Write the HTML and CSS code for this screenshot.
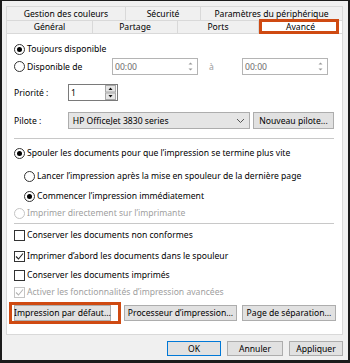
FILE: index.html
```html
<!DOCTYPE html>
<html>
<head>
<meta charset="utf-8">
<link rel="stylesheet" href="styles.css">
</head>
<body>
<div class="win">
  <div class="tabs">
    <div class="tabrow">
      <div class="tab w-gest">Gestion des couleurs</div>
      <div class="tab w-secu">Sécurité</div>
      <div class="tab w-param last">Paramètres du périphérique</div>
    </div>
    <div class="tabrow row2">
      <div class="tab w-gen">Général</div>
      <div class="tab w-part">Partage</div>
      <div class="tab w-ports">Ports</div>
      <div class="tab w-av last sel">Avancé<span class="mark mark-tab"></span></div>
    </div>
  </div>
  <div class="panel">
    <div class="row mt7"><span class="radio on"></span><span>Toujours disponible</span></div>
    <div class="row h17 mt1">
      <div class="lbl-avail"><span class="radio"></span><span>Disponible de</span></div>
      <div class="input time dis"><span class="val">00:00</span><span class="spin"><svg width="11" height="15" viewBox="0 0 11 15"><path d="M3.5 5.5 L5.5 3.5 L7.5 5.5 Z" fill="#9a9a9a"/><path d="M3.5 9.5 L5.5 11.5 L7.5 9.5 Z" fill="#9a9a9a"/></svg></span></div>
      <span class="to">à</span>
      <div class="input time dis"><span class="val">00:00</span><span class="spin"><svg width="11" height="15" viewBox="0 0 11 15"><path d="M3.5 5.5 L5.5 3.5 L7.5 5.5 Z" fill="#9a9a9a"/><path d="M3.5 9.5 L5.5 11.5 L7.5 9.5 Z" fill="#9a9a9a"/></svg></span></div>
    </div>
    <div class="row h17 mt9">
      <span class="lbl">Priorité :</span>
      <div class="input prio"><span class="val">1</span><span class="spin dark"><svg width="11" height="15" viewBox="0 0 11 15"><rect x="0.5" y="0.5" width="10" height="6.5" fill="#e5e5e5" stroke="#a8a8a8"/><rect x="0.5" y="8" width="10" height="6.5" fill="#e5e5e5" stroke="#a8a8a8"/><path d="M3.5 5 L5.5 2.5 L7.5 5 Z" fill="#111"/><path d="M3.5 10 L5.5 12.5 L7.5 10 Z" fill="#111"/></svg></span></div>
    </div>
    <div class="row h17 mt11">
      <span class="lbl">Pilote :</span>
      <div class="select"><span>HP OfficeJet 3830 series</span><svg width="9" height="6" viewBox="0 0 9 6"><path d="M1 1 L4.5 4.5 L8 1" fill="none" stroke="#555" stroke-width="1"/></svg></div>
      <span class="btn b-new">Nouveau pilote...</span>
    </div>
    <div class="sep mt9"></div>
    <div class="row mt6"><span class="radio on"></span><span>Spouler les documents pour que l’impression se termine plus vite</span></div>
    <div class="row ind mt7"><span class="radio"></span><span>Lancer l’impression après la mise en spouleur de la dernière page</span></div>
    <div class="row ind mt4"><span class="radio on"></span><span>Commencer l’impression immédiatement</span></div>
    <div class="row mt1 disabled"><span class="radio dis"></span><span>Imprimer directement sur l’imprimante</span></div>
    <div class="sep mt2"></div>
    <div class="row mt3"><span class="check"></span><span>Conserver les documents non conformes</span></div>
    <div class="row mt5"><span class="check"><svg width="9" height="9" viewBox="0 0 9 9"><path d="M1 4.5 L3.5 7 L8 1.5" fill="none" stroke="#222" stroke-width="1.1"/></svg></span><span>Imprimer d’abord les documents dans le spouleur</span></div>
    <div class="row mt3"><span class="check"></span><span>Conserver les documents imprimés</span></div>
    <div class="row mt1 disabled"><span class="check dis"><svg width="9" height="9" viewBox="0 0 9 9"><path d="M1 4.5 L3.5 7 L8 1.5" fill="none" stroke="#b5b5b5" stroke-width="1.1"/></svg></span><span>Activer les fonctionnalités d’impression avancées</span></div>
    <div class="row btnrow mt5">
      <span class="btn b-def">Impression par défaut...<span class="mark mark-btn"></span></span>
      <span class="btn b-proc">Processeur d’impression...</span>
      <span class="btn b-sep">Page de séparation...</span>
    </div>
  </div>
  <div class="footer">
    <span class="btn f-ok">OK</span>
    <span class="btn f-cancel">Annuler</span>
    <span class="btn f-apply">Appliquer</span>
  </div>
</div>
</body>
</html>
```
FILE: styles.css
```css
* { box-sizing: border-box; }
html, body { margin: 0; padding: 0; }
body {
  width: 350px;
  height: 363px;
  overflow: hidden;
  font-family: "Noto Sans", "Open Sans", sans-serif;
  font-size: 8.6px;
  color: #000;
}
.win {
  width: 350px;
  height: 363px;
  background: #f0f0f0;
  border-top: 1px solid #1b1b1b;
  border-left: 2px solid #1b1b1b;
  border-right: 2px solid #1b1b1b;
  border-bottom: 3px solid #1b1b1b;
  padding: 5px 5px 0 4px;
  display: flex;
  flex-direction: column;
}
.tabs { display: flex; flex-direction: column; }
.tabrow { display: flex; height: 14px; }
.tabrow.row2 { height: 13px; }
.tab {
  position: relative;
  border-top: 1px solid #d9d9d9;
  border-left: 1px solid #d9d9d9;
  background: #f0f0f0;
  display: flex;
  align-items: center;
  justify-content: center;
  line-height: 12px;
  white-space: nowrap;
}
.tab.last { border-right: 1px solid #d9d9d9; }
.tab.sel { background: #fff; }
.w-gest { width: 119px; }
.w-secu { width: 75px; }
.w-param { width: 143px; }
.w-gen { width: 86px; }
.w-part { width: 85px; }
.w-ports { width: 81px; }
.w-av { width: 85px; }

.mark { position: absolute; border: 3px solid #cf4a12; pointer-events: none; }
.mark-tab { left: 0; top: -2px; width: 80px; height: 15px; }
.mark-btn { left: -6px; top: -4px; right: -11px; bottom: -4px; }

.panel {
  background: #fff;
  border: 1px solid #d9d9d9;
  height: 302px;
  padding: 0 8px 0 7px;
  display: flex;
  flex-direction: column;
}
.row { display: flex; align-items: center; height: 16px; white-space: nowrap; }
.h17 { height: 17px; }
.ind { padding-left: 10px; }
.mt1 { margin-top: 1px; }
.mt2 { margin-top: 2px; }
.mt3 { margin-top: 3px; }
.mt4 { margin-top: 4px; }
.mt5 { margin-top: 5px; }
.mt6 { margin-top: 6px; }
.mt7 { margin-top: 7px; }
.mt9 { margin-top: 9px; }
.mt11 { margin-top: 11px; }

.radio {
  position: relative;
  width: 11px;
  height: 11px;
  border: 1px solid #333;
  border-radius: 50%;
  margin-right: 2px;
  flex: none;
  background: #fff;
}
.radio.on::after {
  content: "";
  position: absolute;
  left: 2px; top: 2px;
  width: 5px; height: 5px;
  border-radius: 50%;
  background: #000;
}
.radio.dis { border-color: #c4c4c4; }
.check {
  width: 11px;
  height: 11px;
  border: 1px solid #333;
  margin-right: 2px;
  flex: none;
  display: flex;
  align-items: center;
  justify-content: center;
  background: #fff;
}
.check.dis { border-color: #c4c4c4; }
.disabled { color: #a0a0a0; }

.lbl-avail { display: flex; align-items: center; width: 98px; }
.lbl { width: 54px; }
.input {
  display: flex;
  align-items: center;
  justify-content: space-between;
  height: 17px;
  border: 1px solid #7a7a7a;
  background: #fff;
  padding-left: 2px;
}
.input.dis { border-color: #b4b4b4; color: #6d6d6d; }
.time { width: 86px; }
.prio { width: 50px; }
.spin { display: flex; align-items: center; width: 12px; height: 15px; }
.to { width: 44px; padding-left: 11px; color: #9a9a9a; }

.select {
  width: 183px;
  height: 17px;
  border: 1px solid #adadad;
  background: #e5e5e5;
  display: flex;
  align-items: center;
  justify-content: space-between;
  padding: 0 4px 0 4px;
}
.btn {
  position: relative;
  display: flex;
  align-items: center;
  justify-content: center;
  height: 16px;
  border: 1px solid #adadad;
  background: #e1e1e1;
  white-space: nowrap;
  flex: none;
}
.b-new { width: 81px; height: 17px; margin-left: 3px; }
.btnrow { height: 16px; }
.b-def { width: 97px; }
.b-proc { width: 113px; margin-left: 13px; }
.b-sep { width: 94px; margin-left: 5px; }
.sep { height: 1px; background: #c8c8c8; width: 320px; flex: none; }

.footer { display: flex; margin-top: 6px; padding-left: 161px; }
.f-ok { width: 54px; height: 15px; border-color: #0078d7; }
.f-cancel { width: 56px; height: 15px; margin-left: 6px; }
.f-apply { width: 54px; height: 15px; margin-left: 6px; }
```
